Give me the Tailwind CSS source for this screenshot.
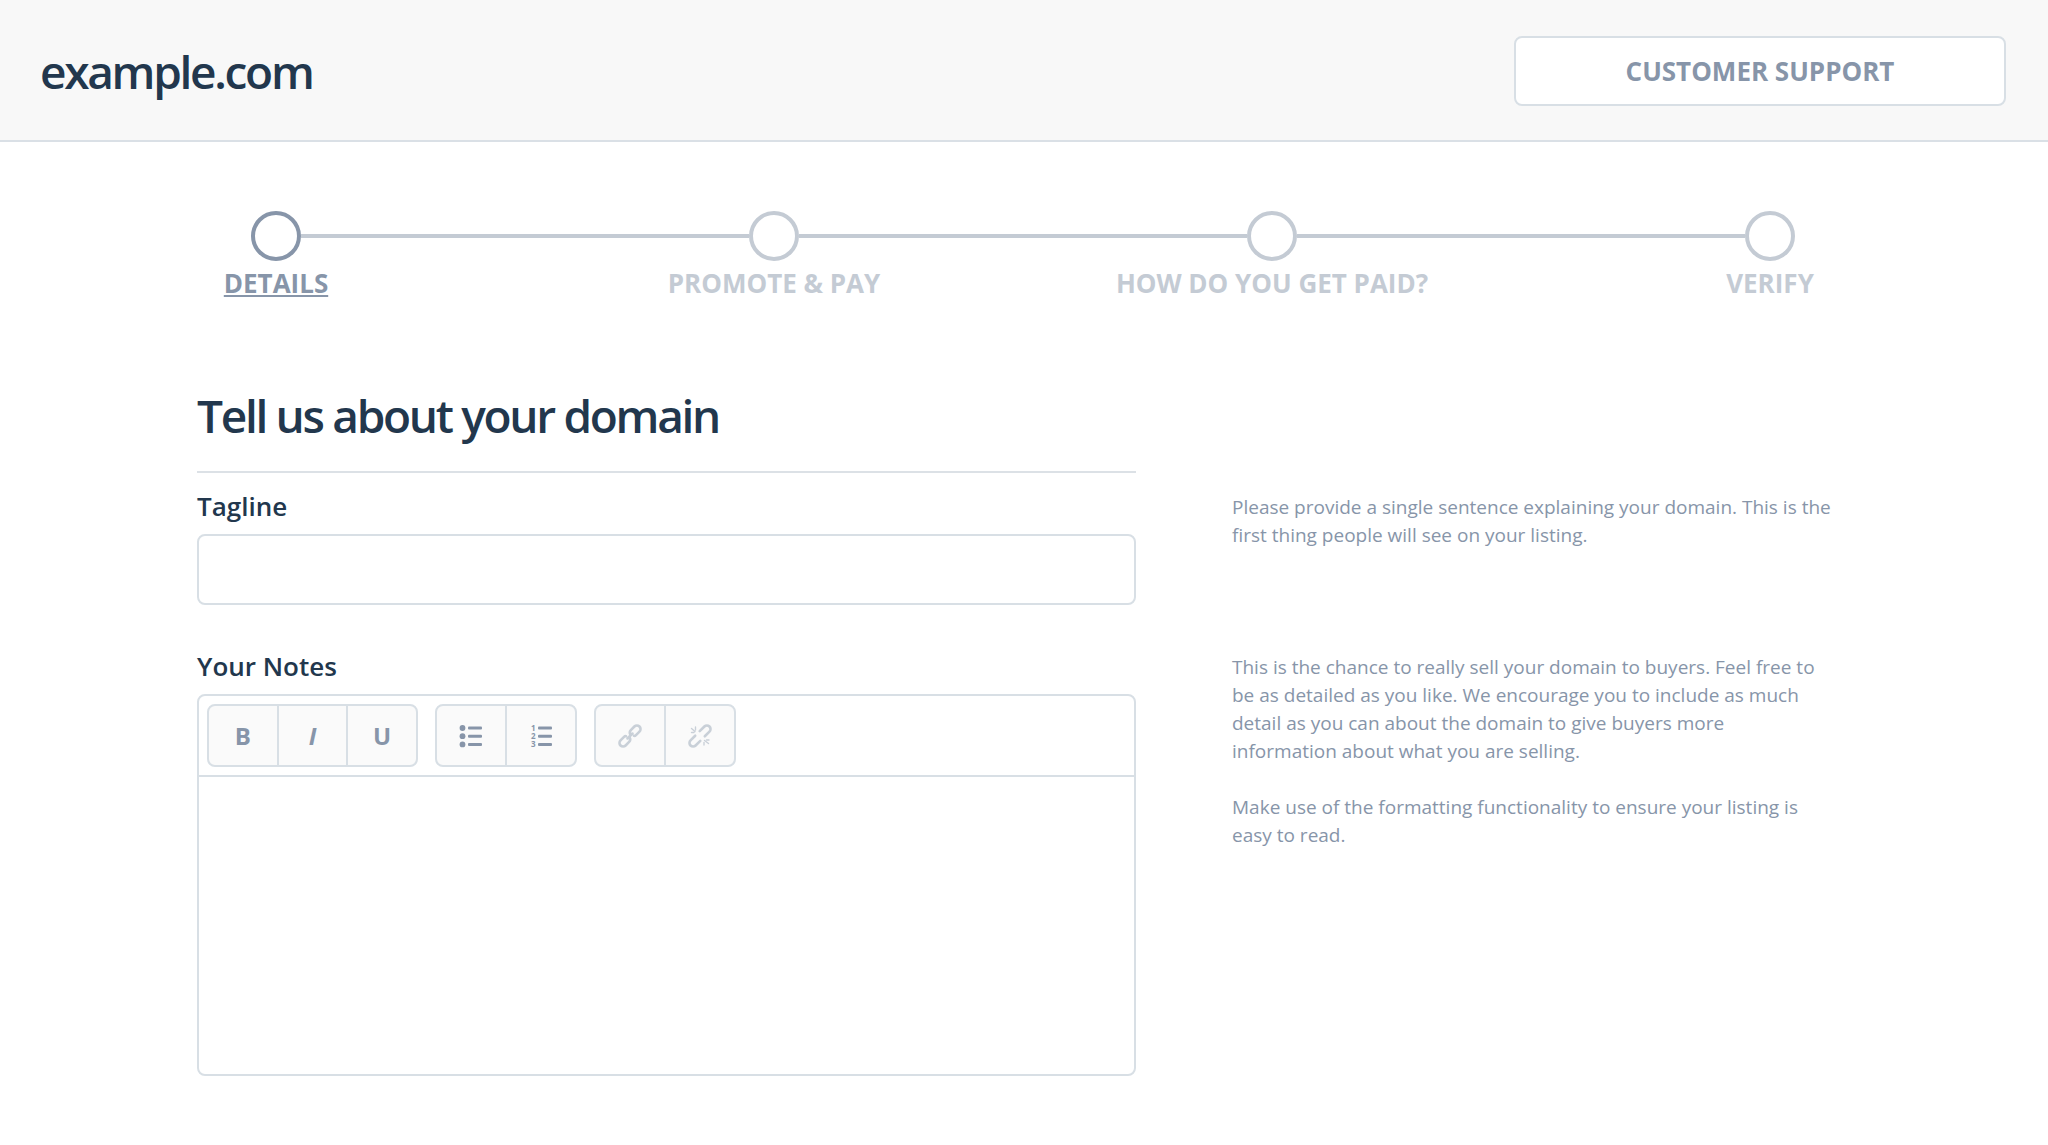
<!DOCTYPE html>
<html lang="en">
<head>
<meta charset="utf-8">
<title>Tell us about your domain</title>
<script src="https://cdn.jsdelivr.net/npm/@tailwindcss/browser@4"></script>
</head>
<body class="bg-white font-['Open_Sans',sans-serif] text-[#22374d]">
<header class="flex h-[142px] items-center justify-between border-b-2 border-[#dae0e6] bg-[#f8f8f8] pt-0.5 pr-[42px] pl-10">
  <a href="#" class="text-[46px] leading-[60px] font-semibold tracking-tighter">example.com</a>
  <button type="button" class="h-[70px] w-[492px] rounded-lg border-2 border-[#d8dfe5] bg-white text-[26px] font-bold text-[#8795a9]">CUSTOMER SUPPORT</button>
</header>

<nav aria-label="Progress" class="pt-[69px] pr-[29px] pl-[27px]">
  <ol class="grid grid-cols-4 text-[26px] leading-[36px] font-bold text-[#c4cbd4]">
    <li class="flex flex-col items-center" aria-current="step">
      <div class="flex w-full items-center"><span class="flex-1"></span><span class="size-[50px] rounded-full border-4 border-[#8795a9]"></span><span class="h-1 flex-1 bg-[#c4cbd4]"></span></div>
      <a href="#" class="mt-1 text-[#8795a9] underline">DETAILS</a>
    </li>
    <li class="flex flex-col items-center">
      <div class="flex w-full items-center"><span class="h-1 flex-1 bg-[#c4cbd4]"></span><span class="size-[50px] rounded-full border-4 border-[#c4cbd4]"></span><span class="h-1 flex-1 bg-[#c4cbd4]"></span></div>
      <span class="mt-1">PROMOTE &amp; PAY</span>
    </li>
    <li class="flex flex-col items-center">
      <div class="flex w-full items-center"><span class="h-1 flex-1 bg-[#c4cbd4]"></span><span class="size-[50px] rounded-full border-4 border-[#c4cbd4]"></span><span class="h-1 flex-1 bg-[#c4cbd4]"></span></div>
      <span class="mt-1">HOW DO YOU GET PAID?</span>
    </li>
    <li class="flex flex-col items-center">
      <div class="flex w-full items-center"><span class="h-1 flex-1 bg-[#c4cbd4]"></span><span class="size-[50px] rounded-full border-4 border-[#c4cbd4]"></span><span class="flex-1"></span></div>
      <span class="mt-1">VERIFY</span>
    </li>
  </ol>
</nav>

<main class="mx-auto grid max-w-[1654px] grid-cols-[939fr_619fr] gap-x-24 pt-[86px] pb-[69px]">
  <h1 class="border-b-2 border-[#dce1e6] pb-7 text-[46px] leading-[56px] font-semibold tracking-tighter">Tell us about your domain</h1>
  <div></div>

  <div class="pt-4">
    <label for="tagline" class="block text-[26px] leading-[34px] font-semibold">Tagline</label>
    <input id="tagline" type="text" class="mt-[11px] block h-[71px] w-full rounded-lg border-2 border-[#d8dfe5] px-4 text-[26px]">
  </div>
  <p class="max-w-[601px] pt-5 text-[19px] leading-[28px] text-[#8795a9]">Please provide a single sentence explaining your domain. This is the first thing people will see on your listing.</p>

  <div class="pt-11">
    <label for="notes" class="block text-[26px] leading-[34px] font-semibold">Your Notes</label>
    <div class="mt-[11px] rounded-lg border-2 border-[#d8dfe5]">
      <div role="toolbar" aria-label="Formatting" class="flex gap-[17px] border-b-2 border-[#d8dfe5] p-2 text-[24px] font-bold text-[#8795a9]">
        <div class="flex h-[63px] w-[211px] divide-x-2 divide-[#d8dfe5] rounded-lg border-2 border-[#d8dfe5] bg-[#fafafa]">
          <button type="button" aria-label="Bold" class="flex-1">B</button>
          <button type="button" aria-label="Italic" class="flex-1 italic">I</button>
          <button type="button" aria-label="Underline" class="flex-1">U</button>
        </div>
        <div class="flex h-[63px] w-[142px] divide-x-2 divide-[#d8dfe5] rounded-lg border-2 border-[#d8dfe5] bg-[#fafafa]">
          <button type="button" aria-label="Bulleted list" class="flex flex-1 items-center justify-center">
            <svg class="size-6" viewBox="0 0 24 24" fill="currentColor" stroke="none"><circle cx="3.5" cy="4" r="2.9"/><circle cx="3.5" cy="12.2" r="2.9"/><circle cx="3.5" cy="20.4" r="2.9"/><rect x="9" y="2.6" width="14" height="3" rx="1"/><rect x="9" y="10.8" width="14" height="3" rx="1"/><rect x="9" y="19" width="14" height="3" rx="1"/></svg>
          </button>
          <button type="button" aria-label="Numbered list" class="flex flex-1 items-center justify-center">
            <svg class="size-6 overflow-visible" viewBox="0 0 24 24" fill="currentColor"><text x="2" y="7" font-size="8">1</text><text x="2" y="15.2" font-size="8">2</text><text x="2" y="23.4" font-size="8">3</text><rect x="9" y="2.6" width="14" height="3" rx="1"/><rect x="9" y="10.8" width="14" height="3" rx="1"/><rect x="9" y="19" width="14" height="3" rx="1"/></svg>
          </button>
        </div>
        <div class="flex h-[63px] w-[142px] divide-x-2 divide-[#d8dfe5] rounded-lg border-2 border-[#d8dfe5] bg-[#fafafa] text-[#c9d0d8]">
          <button type="button" aria-label="Add link" class="flex flex-1 items-center justify-center">
            <svg class="size-6" viewBox="0 0 24 24" fill="none" stroke="currentColor" stroke-width="2.6" stroke-linecap="round"><g transform="rotate(-45 12 12)"><path d="M9 9.5V9.2Q8.6 8.4 7.5 8.4H2.2A3.6 3.6 0 0 0 2.2 15.6H7.2A3.6 3.6 0 0 0 10.6 13"/><path d="M15 14.5V14.8Q15.4 15.6 16.5 15.6H21.8A3.6 3.6 0 0 0 21.8 8.4H16.8A3.6 3.6 0 0 0 13.4 11"/><path d="M8.5 12H15.5"/></g></svg>
          </button>
          <button type="button" aria-label="Remove link" class="flex flex-1 items-center justify-center">
            <svg class="size-6" viewBox="0 0 24 24" fill="none" stroke="currentColor" stroke-width="2.6" stroke-linecap="round"><g transform="rotate(-45 12 12)"><path d="M8.8 8.4H2.2A3.6 3.6 0 0 0 2.2 15.6H8.8"/><path d="M15.2 8.4H21.8A3.6 3.6 0 0 1 21.8 15.6H15.2"/></g><path stroke-width="1.4" d="M3.5 4.5L7 7.5M7.5 3V6M3.5 8.5H6M16.5 16.5L20.5 19.5M16 18.5V21M18.5 16H21"/></svg>
          </button>
        </div>
      </div>
      <textarea id="notes" class="block h-[297px] w-full resize-none rounded-lg p-4 text-[20px]"></textarea>
    </div>
  </div>
  <div class="max-w-[601px] space-y-7 pt-12 text-[19px] leading-[28px] text-[#8795a9]">
    <p>This is the chance to really sell your domain to buyers. Feel free to be as detailed as you like. We encourage you to include as much detail as you can about the domain to give buyers more information about what you are selling.</p>
    <p>Make use of the formatting functionality to ensure your listing is easy to read.</p>
  </div>
</main>
</body>
</html>
